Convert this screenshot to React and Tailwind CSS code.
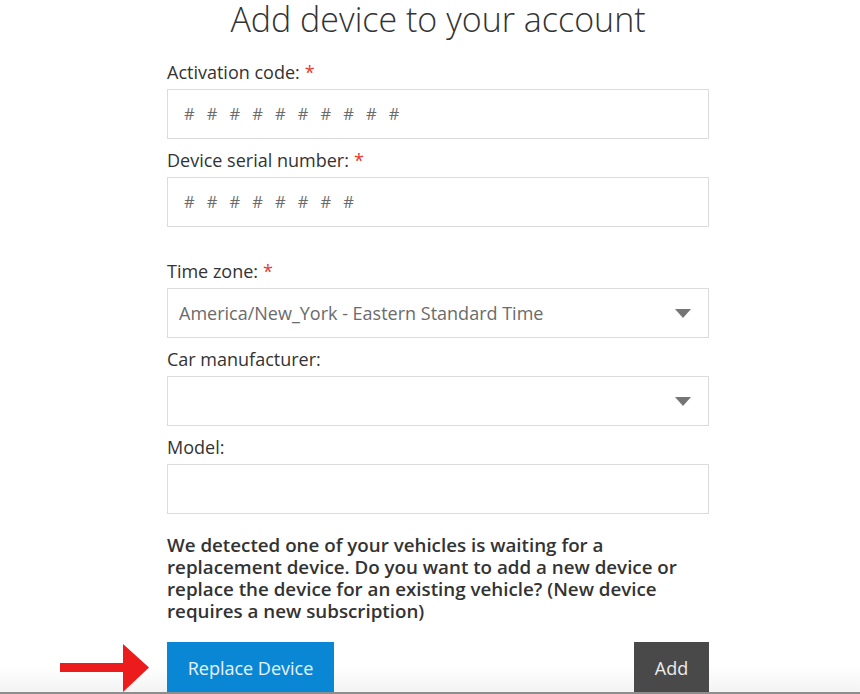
function Label({ children, required }) {
  return (
    <label className="mb-[6px] block text-[18px] leading-[22px] text-[#333]">
      {children}
      {required && <span className="ml-[5px] text-[#e8372b]">*</span>}
    </label>
  )
}

function TextBox({ placeholder }) {
  return (
    <div className="mb-[10px] flex h-[50px] items-center border border-[#dcdcdc] bg-white px-[16px]">
      {placeholder && (
        <span className="text-[16.5px] tracking-[3.9px] text-[#6b6b6b]">{placeholder}</span>
      )}
    </div>
  )
}

function Select({ value }) {
  return (
    <div className="mb-[10px] flex h-[50px] items-center justify-between border border-[#dcdcdc] bg-white pl-[11px] pr-[16px]">
      <span className="text-[18px] text-[#6b6b6b]">{value}</span>
      <svg width="18" height="11" viewBox="0 0 18 11" className="shrink-0">
        <path d="M1 1 H17 L9 10 Z" fill="#757575" />
      </svg>
    </div>
  )
}

export default function App() {
  return (
    <div className="relative h-[694px] overflow-hidden bg-white font-['Open_Sans',sans-serif]">
      {/* soft shading above the bottom window edge */}
      <div className="absolute inset-x-0 bottom-[2px] h-[26px] bg-gradient-to-b from-white to-[#f3f3f3]" />

      <div className="relative ml-[167px] w-[542px]">
        <h1 className="-mt-[1px] mb-[22px] text-center text-[34px] font-light leading-[40px] text-[#333]">
          Add device to your account
        </h1>

        <Label required>Activation code:</Label>
        <TextBox placeholder="# # # # # # # # # #" />

        <Label required>Device serial number:</Label>
        <TextBox placeholder="# # # # # # # #" />

        <div className="h-[23px]" />

        <Label required>Time zone:</Label>
        <Select value="America/New_York - Eastern Standard Time" />

        <Label>Car manufacturer:</Label>
        <Select value="" />

        <Label>Model:</Label>
        <TextBox />

        <p className="mt-[20px] text-[18.75px] font-semibold leading-[22px] text-[#333]">
          We detected one of your vehicles is waiting for a replacement device. Do you want to add
          a new device or replace the device for an existing vehicle? (New device requires a new
          subscription)
        </p>

        <div className="mt-[20px] flex items-start justify-between">
          <button className="h-[56px] w-[167px] bg-[#0a87d4] pb-[3px] text-[18px] text-white/90">
            Replace Device
          </button>
          <button className="h-[56px] w-[75px] bg-[#494949] pb-[3px] text-[18px] text-white/90">
            Add
          </button>
        </div>
      </div>

      {/* annotation arrow */}
      <svg
        className="absolute left-[58px] top-[644px]"
        width="94"
        height="48"
        viewBox="0 0 94 48"
      >
        <rect x="2" y="19" width="66" height="9" fill="#ec1c1c" />
        <path d="M65 0 L91 23.5 L65 48 Z" fill="#ec1c1c" />
      </svg>

      {/* bottom window edge */}
      <div className="absolute inset-x-0 bottom-0 h-[2px] bg-[#8d8d8d]" />
    </div>
  )
}
